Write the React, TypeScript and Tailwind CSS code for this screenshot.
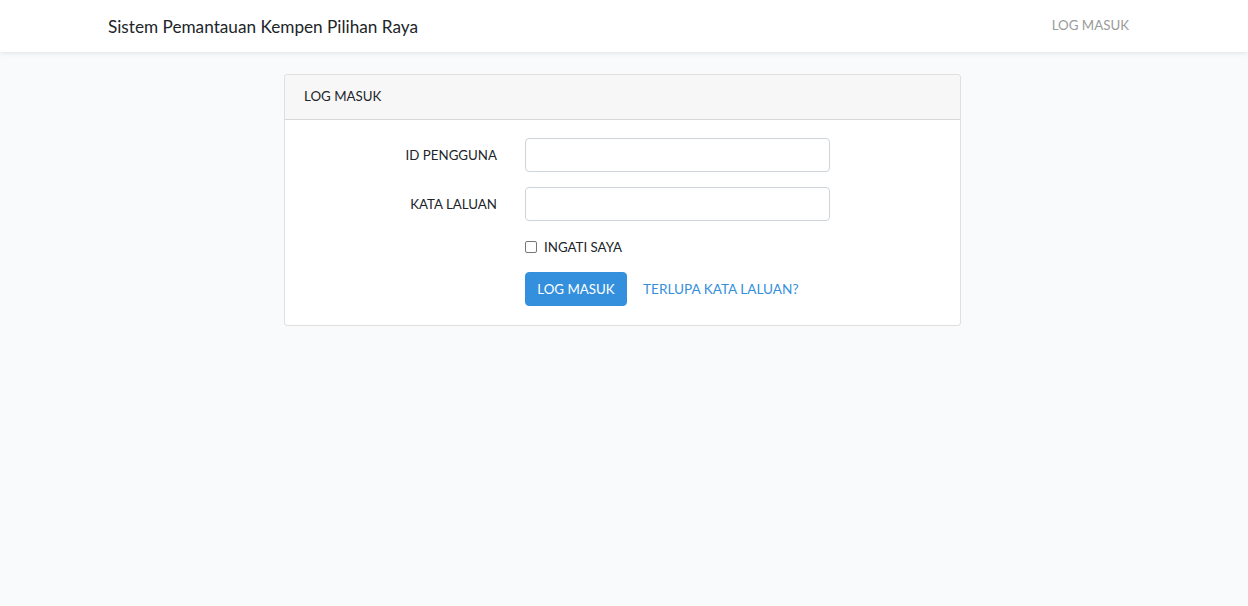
import React from "react";

export default function App() {
  return (
    <div className="min-h-[606px] bg-[#f8fafc] text-[#212529] text-[13.3px]" style={{ fontFamily: "Lato, 'Noto Sans', sans-serif" }}>
      <nav className="h-[52px] bg-white shadow-[0_2px_4px_rgba(0,0,0,0.075)] flex items-center justify-between pl-[108px] pr-[119px]">
        <span className="text-[17.2px] text-[#212529] pt-[1px]">Sistem Pemantauan Kempen Pilihan Raya</span>
        <span className="text-[13.3px] text-[#9a9a9a]">LOG MASUK</span>
      </nav>
      <div className="flex pt-[22px] pl-[284px]">
        <div className="w-[677px] bg-white border border-[rgba(0,0,0,0.125)] rounded-[4px]">
          <div className="h-[45px] bg-[#f7f7f7] border-b border-[rgba(0,0,0,0.125)] flex items-center px-[19px] rounded-t-[4px]">LOG MASUK</div>
          <div className="pt-[18px] pb-[19px] flex flex-col">
            <div className="flex items-center h-[34px]">
              <label className="w-[240px] text-right pr-[28px] pt-[1px]">ID PENGGUNA</label>
              <input className="w-[305px] h-[34px] border border-[#ced4da] rounded-[4px] bg-white" />
            </div>
            <div className="flex items-center h-[34px] mt-[15px]">
              <label className="w-[240px] text-right pr-[28px] pt-[1px]">KATA LALUAN</label>
              <input type="password" className="w-[305px] h-[34px] border border-[#ced4da] rounded-[4px] bg-white" />
            </div>
            <div className="flex items-center mt-[17px] pl-[240px] h-[18px]">
              <span className="w-[12px] h-[12px] border border-[#767676] rounded-[2px] bg-white" />
              <span className="ml-[7px] pt-[1px]">INGATI SAYA</span>
            </div>
            <div className="flex items-center mt-[16px] pl-[240px]">
              <button className="h-[34px] w-[102px] bg-[#3490dc] text-white rounded-[4px] border border-[#3490dc] pt-[1px]">LOG MASUK</button>
              <a className="ml-[16px] text-[#3490dc] text-[13.6px] pt-[1px]">TERLUPA KATA LALUAN?</a>
            </div>
          </div>
        </div>
      </div>
    </div>
  );
}
